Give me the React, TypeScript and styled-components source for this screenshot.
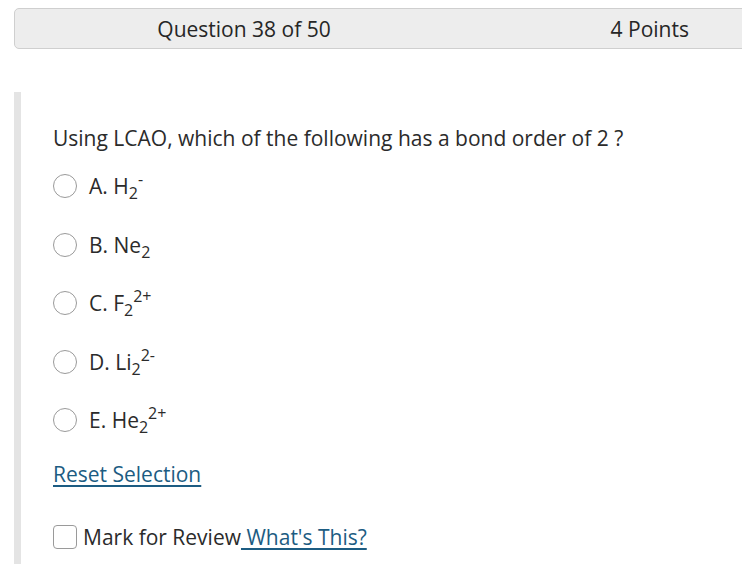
import React from "react";
import styled, { createGlobalStyle } from "styled-components";

const GlobalStyle = createGlobalStyle`
  html, body {
    margin: 0;
    padding: 0;
    background: #ffffff;
    overflow: hidden;
  }
  body {
    font-family: "Open Sans", "Noto Sans", Arial, sans-serif;
    color: #2b2b2b;
  }
`;

const options = [
  { key: "A", base: "H", sub: "2", sup: "-" },
  { key: "B", base: "Ne", sub: "2", sup: "" },
  { key: "C", base: "F", sub: "2", sup: "2+" },
  { key: "D", base: "Li", sub: "2", sup: "2-" },
  { key: "E", base: "He", sub: "2", sup: "2+" },
];

const App = () => {
  return (
    <Page>
      <GlobalStyle />
      <Header>
        <HeaderCell>Question 38 of 50</HeaderCell>
        <PointsCell>4 Points</PointsCell>
      </Header>
      <QuestionBlock>
        <Prompt>Using LCAO, which of the following has a bond order of 2 ?</Prompt>
        <OptionList>
          {options.map((o) => (
            <OptionRow key={o.key}>
              <Radio />
              <OptionLabel>
                {o.key}. {o.base}
                <Sub>{o.sub}</Sub>
                {o.sup && <Sup>{o.sup}</Sup>}
              </OptionLabel>
            </OptionRow>
          ))}
        </OptionList>
        <ResetRow>
          <Link href="#">Reset Selection</Link>
        </ResetRow>
        <ReviewRow>
          <CheckBox />
          <span>Mark for Review</span>
          <Link href="#">&nbsp;What's This?</Link>
        </ReviewRow>
      </QuestionBlock>
    </Page>
  );
};

export default App;

const Page = styled.div`
  padding: 8px 0 0 14px;
  width: 100%;
  box-sizing: border-box;
  height: 565px;
  overflow: hidden;
`;

const Header = styled.div`
  display: grid;
  grid-template-columns: 458px 1fr;
  align-items: center;
  height: 39px;
  margin-right: -20px;
  background: #ededed;
  border: 1px solid #cfcfcf;
  border-radius: 5px;
  font-size: 21px;
  color: #262626;
`;

const HeaderCell = styled.div`
  text-align: center;
`;

const PointsCell = styled.div`
  text-align: right;
  padding-right: 72px;
`;

const QuestionBlock = styled.div`
  margin-top: 43px;
  border-left: 7px solid #e4e4e4;
  padding: 31px 0 12px 32px;
  font-size: 21px;
`;

const Prompt = styled.div`
  line-height: 30px;
  margin-bottom: 21px;
`;

const OptionList = styled.div`
  display: flex;
  flex-direction: column;
  gap: 34.5px;
`;

const OptionRow = styled.label`
  display: flex;
  align-items: center;
  height: 24px;
  gap: 12px;
`;

const Radio = styled.span`
  width: 22px;
  height: 22px;
  border-radius: 50%;
  border: 1px solid #9a9a9a;
  background: #fff;
  flex-shrink: 0;
`;

const OptionLabel = styled.span`
  line-height: 24px;
  white-space: nowrap;
`;

const Sub = styled.sub`
  font-size: 16px;
  vertical-align: -5px;
  line-height: 0;
`;

const Sup = styled.sup`
  font-size: 16px;
  vertical-align: 9px;
  line-height: 0;
`;

const Link = styled.a`
  color: #1c5c82;
  text-decoration: underline;
  text-underline-offset: 3px;
  text-decoration-thickness: 1.5px;
`;

const ResetRow = styled.div`
  margin-top: 27px;
  line-height: 30px;
`;

const ReviewRow = styled.div`
  display: flex;
  align-items: center;
  margin-top: 33px;
  line-height: 30px;
  white-space: pre;

  & > a {
    display: block;
  }
`;

const CheckBox = styled.span`
  width: 22px;
  height: 22px;
  border: 1px solid #9a9a9a;
  border-radius: 4px;
  margin-right: 6px;
  flex-shrink: 0;
`;
